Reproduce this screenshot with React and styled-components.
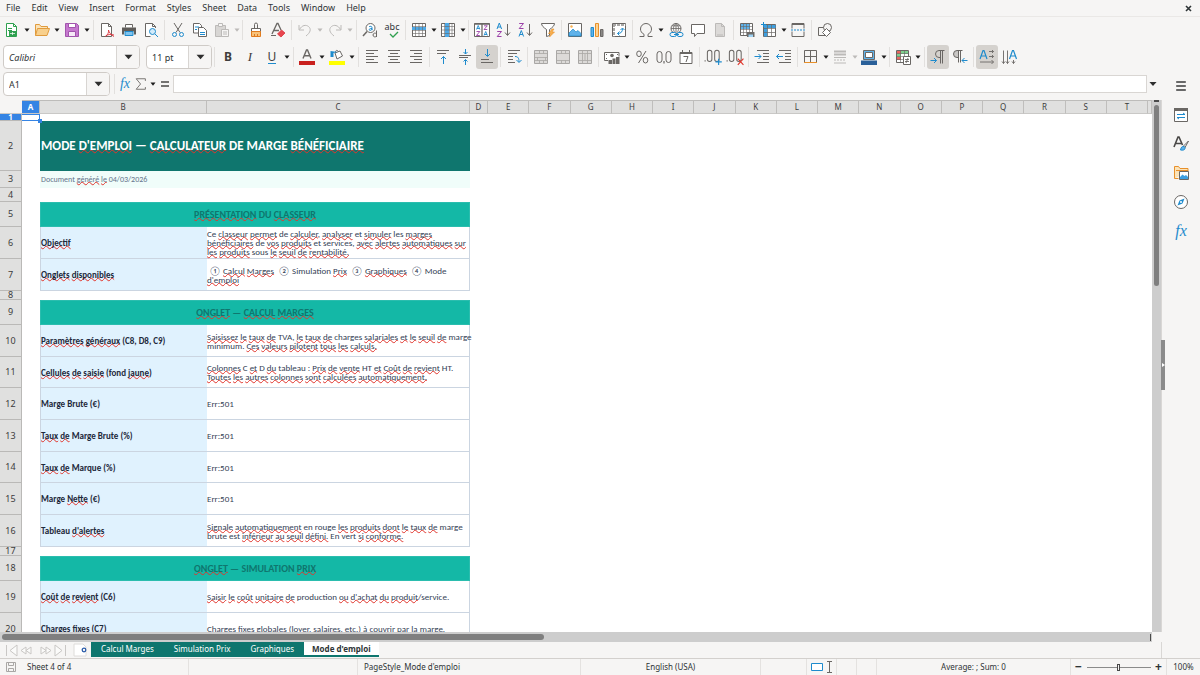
import React, { useState } from "react";
import styled, { createGlobalStyle, css } from "styled-components";

const GlobalStyle = createGlobalStyle`
  * {
    box-sizing: border-box;
  }

  body {
    margin: 0;
    background: #f6f5f4;
    color: #2e3436;
    font-family: "Noto Sans", sans-serif;
    font-size: 8px;
  }

  button,
  input {
    font-family: inherit;
    color: inherit;
    border: 0;
    margin: 0;
    padding: 0;
    background: none;
    outline: none;
  }
`;

const Window = styled.div`
  height: 100vh;
  display: flex;
  flex-direction: column;
  overflow: hidden;
`;

/* ---------- menu bar ---------- */

const MenuBar = styled.nav`
  display: flex;
  align-items: center;
  gap: 11px;
  height: 17px;
  padding: 0 6px;
  border-bottom: 1px solid #eae8e6;
  flex-shrink: 0;
`;

const MenuItem = styled.button`
  font-size: 9px;
  line-height: 16px;
`;

const CloseButton = styled.button`
  display: flex;
  margin-left: auto;
  margin-right: 2px;
`;

/* ---------- toolbars ---------- */

const Toolbar = styled.div`
  display: flex;
  align-items: center;
  height: ${(props) => props.$height};
  padding-left: ${(props) => props.$start};
  flex-shrink: 0;
`;

const ToolButton = styled.button`
  display: flex;
  align-items: center;
  justify-content: center;
  width: 22px;
  height: 24px;
  border-radius: 3px;
  background: ${(props) => (props.$pressed ? "#d5d2ce" : "none")};
`;

const CaretButton = styled.button`
  display: flex;
  align-items: center;
  justify-content: center;
  width: ${(props) => (props.$narrow ? "7px" : "8px")};
  height: 24px;
`;

const Separator = styled.span`
  width: 1px;
  height: 20px;
  margin: 0 2px;
  background: #e2e0de;
`;

const Combo = styled.div`
  display: flex;
  width: ${(props) => props.$width};
  height: 24px;
  margin-right: ${(props) => props.$gap || "0"};
  border: 1px solid #cfcbc7;
  border-radius: 4px;
  background: #fff;
  overflow: hidden;
  flex-shrink: 0;

  input {
    flex: 1;
    min-width: 0;
    padding-left: 5px;
    font-size: 9px;
    font-style: ${(props) => (props.$italic ? "italic" : "normal")};
  }

  button {
    display: flex;
    align-items: center;
    justify-content: center;
    width: 23px;
    border-left: 1px solid #d8d5d2;
    background: #f6f5f4;
  }
`;

/* ---------- work area ---------- */

const Body = styled.div`
  display: flex;
  flex: 1;
  min-height: 0;
`;

const Work = styled.main`
  display: flex;
  flex-direction: column;
  flex: 1;
  min-width: 0;
`;

const FormulaBar = styled.div`
  display: flex;
  align-items: center;
  height: 29px;
  padding: 0 5px 3px 3px;
  flex-shrink: 0;
`;

const FormulaIcon = styled.button`
  display: flex;
  align-items: center;
  justify-content: center;
  width: 16px;
  height: 24px;
`;

const FormulaInput = styled.input`
  flex: 1;
  height: 18px;
  margin-right: 2px;
  padding: 0 4px;
  font-size: 9px;
  border: 1px solid #d9d6d3;
  background: #fff;
`;

const SheetArea = styled.div`
  display: flex;
  flex: 1;
  min-height: 0;
`;

const SheetView = styled.div`
  flex: 1;
  min-width: 0;
  overflow: hidden;
  background: #fff;
`;

const Sheet = styled.table`
  width: 100%;
  table-layout: fixed;
  border-collapse: separate;
  border-spacing: 0;

  td,
  th {
    padding: 0;
  }
`;

const ColumnHeader = styled.th`
  height: 14px;
  font-size: 8px;
  line-height: 12px;
  font-weight: ${(props) => (props.$active ? 700 : 400)};
  color: ${(props) => (props.$active ? "#fff" : "#3c3c3c")};
  background: ${(props) => (props.$active ? "#3584e4" : "#e0e0df")};
  border-top: 1px solid #bdbcba;
  border-bottom: 1px solid #c9c8c6;
  border-right: 1px solid #bfbebc;
`;

const Corner = styled(ColumnHeader)`
  background: #f6f5f4;
  border-top-color: #f6f5f4;
  border-right: 0;
`;

const RowHeader = styled.th`
  height: ${(props) => props.$height}px;
  font-size: ${(props) => (props.$active ? "8px" : "9px")};
  line-height: 6px;
  font-weight: ${(props) => (props.$active ? 700 : 400)};
  color: ${(props) => (props.$active ? "#fff" : "#3c3c3c")};
  background: ${(props) => (props.$active ? "#3584e4" : "#e0e0df")};
  border-bottom: 1px solid #bab9b7;
  border-right: 1px solid #bab9b7;
`;

const cellText = css`
  font-family: Carlito, Lato, sans-serif;
  text-align: left;
  vertical-align: middle;
`;

const Cursor = styled.td`
  position: relative;
  border: 1px solid #3584e4;
  border-left: 0;

  &::after {
    content: "";
    position: absolute;
    right: -3px;
    bottom: -3px;
    width: 4px;
    height: 4px;
    background: #3584e4;
  }
`;

const TitleCell = styled.td`
  ${cellText}
  && {
    padding-left: 1px;
  }
  font-size: 13px;
  line-height: 16px;
  font-weight: 700;
  color: #fff;
  background: #0f766e;
`;

const DateCell = styled.td`
  ${cellText}
  && {
    padding-left: 1px;
  }
  font-size: 8px;
  line-height: 9px;
  color: #64748b;
  background: #f0fdfa;
`;

const SectionCell = styled.td`
  ${cellText}
  text-align: center;
  font-size: 10px;
  line-height: 10px;
  font-weight: 700;
  color: #0f766e;
  background: #14b8a6;
  border: 1px solid #2bbdae;
`;

const LabelCell = styled.td`
  ${cellText}
  font-size: 9px;
  line-height: 9px;
  font-weight: 700;
  color: #1e293b;
  background: #e0f2fe;
  border-left: 1px solid #cbd5e1;
  border-bottom: 1px solid #cbd5e1;
`;

const ValueCell = styled.td`
  ${cellText}
  font-size: 9px;
  line-height: 9px;
  white-space: pre;
  color: #334155;
  border-right: 1px solid #cbd5e1;
  border-bottom: 1px solid #cbd5e1;
`;

const Misspelt = styled.span`
  text-decoration: underline wavy #e0342b 1px;
  text-decoration-skip-ink: none;
  text-underline-offset: -1px;
`;

/* ---------- scroll bars ---------- */

const VerticalTrack = styled.div`
  width: 10px;
  padding: 0 2px;
  background: #cdcdcd;
  border-right: 1px solid #d9d7d5;
  flex-shrink: 0;

  &::before {
    content: "";
    display: block;
    height: 2px;
    margin-bottom: 3px;
    background: #4a4a4a;
  }
`;

const VerticalThumb = styled.div`
  height: 34%;
  border-radius: 3px;
  background: #7f7f7f;
`;

const HorizontalTrack = styled.div`
  display: flex;
  align-items: center;
  justify-content: space-between;
  height: 10px;
  margin-right: 10px;
  padding: 0 1px 0 2px;
  background: #cdcdcd;
  flex-shrink: 0;

  &::after {
    content: "";
    width: 1px;
    height: 7px;
    background: #4a4a4a;
  }
`;

const HorizontalThumb = styled.div`
  width: 47.2%;
  height: 6px;
  border-radius: 3px;
  background: #7f7f7f;
`;

/* ---------- sheet tabs ---------- */

const TabBar = styled.div`
  display: flex;
  height: 16px;
  padding-left: 5px;
  border-right: 1px solid #d9d7d5;
  flex-shrink: 0;
`;

const TabNav = styled.button`
  display: flex;
  align-items: center;
  width: ${(props) => props.$width};
`;

const SheetTab = styled.button`
  height: 15px;
  padding: 0 ${(props) => (props.$active ? "8px" : "10px")};
  font-size: 8px;
  line-height: 13px;
  font-weight: ${(props) => (props.$active ? 700 : 400)};
  color: ${(props) => (props.$active ? "#2e3436" : "#fff")};
  background: ${(props) => (props.$active ? "#fff" : "#0f766e")};
  border-bottom: 2px solid #0f766e;
`;

/* ---------- side bar ---------- */

const SideBar = styled.aside`
  position: relative;
  display: flex;
  flex-direction: column;
  align-items: center;
  width: 38px;
  flex-shrink: 0;
`;

const SideButton = styled.button`
  display: flex;
  align-items: center;
  justify-content: center;
  width: 29px;
  height: 29px;
`;

const SideHandle = styled.button`
  position: absolute;
  left: -1px;
  top: 50%;
  display: flex;
  align-items: center;
  width: 4px;
  height: 50px;
  margin-top: -25px;
  background: #8b8b8b;
`;

/* ---------- status bar ---------- */

const StatusBar = styled.footer`
  display: grid;
  grid-template-columns: 21px 168fr 169fr 223fr 180fr 46px 30px 20px 20px 194fr 96px 33px;
  height: 17px;
  border-top: 1px solid #d3d0cd;
  flex-shrink: 0;
`;

const StatusCell = styled.div`
  display: flex;
  align-items: center;
  justify-content: ${(props) => (props.$left ? "flex-start" : "center")};
  gap: 4px;
  padding-left: ${(props) => (props.$left ? "6px" : "0")};
  font-size: 8px;
  line-height: 14px;
  white-space: nowrap;
  border-right: ${(props) => (props.$open ? "0" : "1px solid #e4e2e0")};
`;

const ZoomButton = styled.button`
  width: 8px;
  font-size: 12px;
  line-height: 12px;
  font-weight: 700;
`;

const ZoomSlider = styled.input`
  width: 64px;
  height: 9px;
  appearance: none;

  &::-webkit-slider-runnable-track {
    height: 1px;
    background: #8b8b8b;
  }

  &::-webkit-slider-thumb {
    appearance: none;
    width: 3px;
    height: 7px;
    margin-top: -3px;
    border: 1px solid #4a4a4a;
    background: #f6f5f4;
  }
`;

/* ---------- icons ---------- */

const INK = "#6a6764";
const BLUE = "#1e8bcd";
const GREY = "#bcbab8";

const Svg = ({ children, size = 16 }) => (
  <svg width={size} height={size} viewBox="0 0 16 16" fill="none" stroke={INK}>
    {children}
  </svg>
);

const Glyph = styled.span`
  font-size: ${(props) => props.$size || "14px"};
  line-height: 16px;
  font-weight: ${(props) => props.$weight || 400};
  font-style: ${(props) => (props.$italic ? "italic" : "normal")};
  font-family: ${(props) => (props.$serif ? '"Liberation Serif", serif' : "inherit")};
  color: ${(props) => props.$color || "#3f3d3b"};
`;

const UnderlineGlyph = styled(Glyph)`
  line-height: 13px;
  border-bottom: 1px solid #1e8bcd;
`;

const Caret = ({ color = "#1c1c1c", size = 6 }) => (
  <svg width={size} height={size} viewBox="0 0 6 6">
    <path d="M0.5 1.5h5L3 4.8z" fill={color} />
  </svg>
);

const BigCaret = () => (
  <svg width="9" height="6" viewBox="0 0 9 6">
    <path d="M0.5 0.8h8L4.5 5.2z" fill="#2e2e2e" />
  </svg>
);

const Lines = ({ rows, color = INK }) => (
  <path d={rows.map(([x, y, w]) => `M${x} ${y}h${w}`).join("")} stroke={color} />
);

const ICONS = {
  newDoc: (
    <Svg>
      <path d="M2.5 1.5h7l3 3v10h-10z" fill="#fff" stroke="#2fa04f" />
      <path d="M9.5 1.5v3h3" stroke="#2fa04f" />
      <path d="M4 6.500h4M4 8.500h4" stroke="#2fa04f" />
      <path d="M5 9h7v5H5z" fill="#2fa04f" stroke="none" />
      <path d="M6 11.500h5M8.500 10v3" stroke="#fff" strokeWidth="0.700" />
    </Svg>
  ),
  open: (
    <Svg>
      <path d="M1.5 13.5v-11h4l1.5 2h6.500v2" fill="#fbe3b8" stroke="#e09b3d" />
      <path d="M3.500 6.500h12l-2.500 7h-11.500z" fill="#f8d08d" stroke="#e09b3d" />
    </Svg>
  ),
  save: (
    <Svg>
      <path d="M1.500 1.500h11l2 2v11h-13z" fill="#c678cf" stroke="#a255ad" />
      <path d="M4.500 1.500h7v4h-7z" fill="#fff" stroke="#a255ad" />
      <path d="M4.500 9.500h7v5h-7z" fill="#f7eaf8" stroke="#a255ad" />
    </Svg>
  ),
  pdf: (
    <Svg>
      <path d="M2.500 1.500h7l3 3v10h-10z" fill="#fff" />
      <path d="M9.500 1.500v3h3" />
      <path d="M6.500 14.500c2-1.500 3.500-4 3-6.500M6.500 14c2-1.500 5-2 8.500-1M9.500 8c.5 2.500 2.500 5 5.500 6.500" stroke="#d9343c" strokeWidth="0.900" />
    </Svg>
  ),
  print: (
    <Svg>
      <path d="M4.500 5.500v-3h7v3" fill="#fff" />
      <path d="M1 5.500h14v7h-2v-3H3v3H1z" fill="#5f5c59" stroke="none" />
      <path d="M4 9.500h8v4H4z" fill="#7fc3ee" stroke={BLUE} />
    </Svg>
  ),
  preview: (
    <Svg>
      <path d="M12.500 6V4.500l-3-3h-7v13h5" fill="#fff" />
      <path d="M9.500 1.500v3h3" />
      <circle cx="9.500" cy="9.500" r="3" fill="#d3ebfa" stroke={BLUE} />
      <path d="M12 12l3 3" stroke={BLUE} />
    </Svg>
  ),
  cut: (
    <Svg>
      <path d="M4 1l6 9.500M12 1L6 10.500" />
      <circle cx="4.500" cy="12.500" r="2" stroke={BLUE} />
      <circle cx="11.500" cy="12.500" r="2" stroke={BLUE} />
    </Svg>
  ),
  copy: (
    <Svg>
      <path d="M1.500 1.500h6l2 2v7.500h-8z" fill="#fff" />
      <path d="M6.500 5.500h5l3 3v6h-8z" fill="#fff" />
      <path d="M3 5h4M3 7.500h2" stroke={BLUE} />
      <path d="M8 10.500h5M8 12.500h5" stroke={BLUE} />
    </Svg>
  ),
  paste: (
    <Svg>
      <path d="M1.500 3.500h10v11h-10z" fill="#d8d6d4" stroke={GREY} />
      <path d="M4.500 1.500h4v3h-4z" fill="#f6f5f4" stroke={GREY} />
      <path d="M7.500 7.500h7v7h-7z" fill="#f6f5f4" stroke={GREY} />
      <path d="M9 10h4M9 12h4" stroke={GREY} />
    </Svg>
  ),
  clone: (
    <Svg>
      <path d="M6.500 6V2.500a1.500 1.500 0 0 1 3 0V6" />
      <path d="M3.500 6.500h9v3h-9z" fill="#fff" />
      <path d="M3.500 9.500h9v5h-9z" fill="#f8c27a" stroke="#e07b1e" />
      <path d="M6.500 12v2.500M9.500 12v2.500" stroke="#e07b1e" />
    </Svg>
  ),
  clear: (
    <Svg>
      <path d="M2 12L7 1.500h1l3 6.500M4 8.500h5" strokeWidth="1.300" />
      <path d="M7.500 12l4-4L15 11l-4 4z" fill="#e8464f" stroke="#d9343c" strokeWidth="0.800" />
      <path d="M1 13.500h5" />
    </Svg>
  ),
  undo: (
    <Svg>
      <path d="M2 3v5h5M2.500 7.500C5 3 9 2.500 11.500 4.500c3 2.500 2 6-2.500 9.500" stroke={GREY} />
    </Svg>
  ),
  redo: (
    <Svg>
      <path d="M14 3v5H9M13.500 7.500C11 3 7 2.500 4.500 4.500c-3 2.500-2 6 2.500 9.500" stroke={GREY} />
    </Svg>
  ),
  find: (
    <Svg>
      <circle cx="8.500" cy="6" r="4.500" fill="#fff" />
      <path d="M5 9.500L1 14" strokeWidth="1.500" />
      <path d="M7 4.800c1-.8 3-.7 3 .8v2.600M10 6.500c-3-.2-3.500 1.700-2 1.900 1 0 2-.7 2-1.400" stroke={BLUE} />
      <path d="M14.500 8.500v6.500M14.500 12c-1-1.500-3.500-1-3.500 1s2.500 2.500 3.500 1" />
    </Svg>
  ),
  table: (
    <Svg>
      <path d="M1.500 1.500h13v13h-13z" fill="#fff" />
      <path d="M1 5h14v3H1z" fill="#4fa9e6" stroke="none" />
      <path d="M1.500 4.500h13M1.500 8.500h13M1.500 11.500h13M4.500 1.500v13M8 1.500v13M11.500 1.500v13" strokeWidth="0.600" />
    </Svg>
  ),
  column: (
    <Svg>
      <path d="M1.500 1.500h13v13h-13z" fill="#fff" />
      <path d="M5 1h4v14H5z" fill="#4fa9e6" stroke="none" />
      <path d="M1.500 4.500h13M1.500 8h13M1.500 11.500h13M4.500 1.500v13M9.500 1.500v13M12 1.500v13" strokeWidth="0.600" />
    </Svg>
  ),
  sort: (
    <Svg>
      <path d="M0.500 1.500h15v13h-15z" fill="#fff" />
      <path d="M0.500 2h15M8 2v12.500" strokeWidth="1.300" />
      <path d="M2.500 7.500l1.700-4 1.700 4M3 6.500h2.500M10 13.500l1.700-4 1.700 4M10.500 12.500H13" stroke={BLUE} strokeWidth="0.900" />
      <path d="M2.500 9.500h3.300l-3.300 4h3.300M10 3.800h3.300L10 7.500h3.300" stroke="#9b3fa8" strokeWidth="0.900" />
    </Svg>
  ),
  sortAsc: (
    <Svg>
      <path d="M1 7l2.300-6 2.300 6M1.700 5h3.200" stroke={BLUE} />
      <path d="M1.200 9.500h4.300l-4.300 5h4.300" stroke="#9b3fa8" />
      <path d="M11.500 2v11M9 10.500l2.500 3 2.500-3" />
    </Svg>
  ),
  sortDesc: (
    <Svg>
      <path d="M1.200 1.500h4.300l-4.300 5h4.300" stroke="#9b3fa8" />
      <path d="M1 14.500l2.300-6 2.300 6M1.700 12.500h3.200" stroke={BLUE} />
      <path d="M11.500 2v11M9 10.500l2.500 3 2.500-3" />
    </Svg>
  ),
  filter: (
    <Svg>
      <path d="M1.500 1.500h13c0 2-2 4-5 6v6l-3 1v-7c-3-2-5-4-5-6z" fill="#fff" />
      <path d="M12 7l-3.500 4.500h2.500l-1.500 3.500 5-5h-2.500l2-3z" fill="#f8b04f" stroke="#e8902a" strokeWidth="0.600" />
    </Svg>
  ),
  image: (
    <Svg>
      <path d="M1.500 1.500h13v13h-13z" fill="#fff" />
      <path d="M2 14v-3l4-4 3 3 2-1.500 3 3V14z" fill="#5fb2ea" stroke={BLUE} strokeWidth="0.700" />
      <circle cx="4.500" cy="4.500" r="1.200" fill="#f8b04f" stroke="none" />
    </Svg>
  ),
  chart: (
    <Svg>
      <path d="M2 5.500h2.500v9H2z" fill="#5fb2ea" stroke={BLUE} />
      <path d="M6.500 1.500h3v13h-3z" fill="#fbd394" stroke="#e8902a" />
      <path d="M11.500 7.500H14v7h-2.500z" fill="#8b8987" />
    </Svg>
  ),
  pivot: (
    <Svg>
      <path d="M1.500 1.500h13v13h-13z" fill="#fff" />
      <path d="M2 3h12.500M3 2v12.500" strokeWidth="2" stroke="#a9a7a5" strokeDasharray="3 1" />
      <path d="M6.500 11.500c3.500 0 5-1.500 5-5M9.500 8l2-2 2 2M8.500 9.500l-2 2 2 2" stroke={BLUE} />
    </Svg>
  ),
  omega: (
    <Svg>
      <path d="M1.500 14.500H6v-2.200C3.500 11 2.500 9 2.500 7a5.500 5.500 0 0 1 11 0c0 2-1 4-3.500 5.300v2.200h4.500" />
    </Svg>
  ),
  link: (
    <Svg>
      <circle cx="8" cy="6.500" r="5" />
      <path d="M3 6.500h10M4 3.800h8M8 1.500v9M8 1.500c-3.500 3-3 7-1 9M8 1.500c3.500 3 3 7 1 9" strokeWidth="0.800" />
      <rect x="2" y="10.500" width="6.500" height="4" rx="2" fill="#f6f5f4" stroke={BLUE} />
      <rect x="9" y="10.500" width="6" height="4" rx="2" fill="#f6f5f4" stroke={BLUE} />
      <path d="M6 12.500h5" stroke={BLUE} />
    </Svg>
  ),
  comment: (
    <Svg>
      <path d="M1.500 2.500h13v9H7l-2.500 3v-3h-3z" fill="#fff" />
    </Svg>
  ),
  headerDoc: (
    <Svg>
      <path d="M3.500 1.500h6l3 3v10h-9z" fill="#dcdad8" stroke={GREY} />
      <path d="M9.500 1.500v3h3" stroke={GREY} />
      <path d="M5 13h6" stroke={GREY} />
    </Svg>
  ),
  printArea: (
    <Svg>
      <path d="M1.500 1.500h12v12h-12z" fill="#fff" />
      <path d="M2 2h9v5H2z" fill="#5fb2ea" stroke="none" />
      <path d="M1.500 4.500h12M1.500 7.500h12M1.500 10.500h12M4.500 1.500v12M7.500 1.500v12M10.500 1.500v12" strokeWidth="0.600" />
      <path d="M8 10h7.500v5H8z" fill="#6d6a67" stroke="none" />
      <path d="M9.500 12.500h4.500V15H9.500z" fill="#9fd3f4" stroke="none" />
    </Svg>
  ),
  freeze: (
    <Svg>
      <path d="M2.500 2.500h12v12h-12z" fill="#fff" />
      <path d="M3 3h11.500v3H3zM3 3h3.500v11.500H3z" fill="#3e9fe0" stroke="none" />
      <path d="M2.500 6.500h12M2.500 10.500h12M6.500 2.500v12M10.500 2.500v12" strokeWidth="0.700" />
      <path d="M2.500 0v5M0 2.500h5" stroke={BLUE} />
    </Svg>
  ),
  split: (
    <Svg>
      <path d="M2 6.500v-5h12v5M2 9.500v5h12v-5" />
      <path d="M2 2h12" strokeWidth="2" />
      <path d="M1 8h14" stroke={BLUE} strokeDasharray="2 1" />
    </Svg>
  ),
  shapes: (
    <Svg>
      <path d="M1.500 5.500h7v8h-7z" />
      <circle cx="10.500" cy="5.500" r="4" fill="#f6f5f4" />
      <path d="M9.500 6.500l4 4-4 4-4-4z" fill="#fff" />
    </Svg>
  ),
  fontColor: (
    <Svg>
      <path d="M4 9.500L7.500 1h1L12 9.500M5.200 6.800h5.600" strokeWidth="1.400" />
      <path d="M0 12h16v4H0z" fill="#c9211e" stroke="none" />
    </Svg>
  ),
  fillColor: (
    <Svg>
      <path d="M6 4l5-2 2.500 5-5.500 3z" fill="#fff" />
      <path d="M6.500 4C6 1.500 8 .5 9.500 2.500" />
      <path d="M1.500 2v6h3V4l4-1z" fill={BLUE} stroke="none" />
      <path d="M0 12h16v4H0z" fill="#ffff00" stroke="none" />
    </Svg>
  ),
  alignLeft: <Svg><Lines rows={[[2, 1.5, 12], [2, 4.5, 8], [2, 7.5, 12], [2, 10.5, 8], [2, 13.5, 12]]} /></Svg>,
  alignCenter: <Svg><Lines rows={[[2, 1.5, 12], [4, 4.5, 8], [2, 7.5, 12], [4, 10.5, 8], [2, 13.5, 12]]} /></Svg>,
  alignRight: <Svg><Lines rows={[[2, 1.5, 12], [6, 4.5, 8], [2, 7.5, 12], [6, 10.5, 8], [2, 13.5, 12]]} /></Svg>,
  top: (
    <Svg>
      <Lines rows={[[2, 1.5, 12], [2, 4.500, 9]]} />
      <path d="M8.500 15V7.500M6 10l2.500-2.500L11 10" stroke={BLUE} />
    </Svg>
  ),
  middle: (
    <Svg>
      <Lines rows={[[2, 6.5, 12], [2, 8.500, 9]]} />
      <path d="M8.500 0v5M6.500 3l2 2 2-2M8.500 16v-5.500M6.500 12.500l2-2 2 2" stroke={BLUE} />
    </Svg>
  ),
  bottom: (
    <Svg>
      <Lines rows={[[2, 10.500, 8], [2, 13.500, 12]]} />
      <path d="M8.500 0v7M6 5l2.500 2.500L11 5" stroke={BLUE} />
    </Svg>
  ),
  wrap: (
    <Svg>
      <Lines rows={[[2, 1.500, 12], [2, 4.500, 9], [2, 7.500, 5], [2, 10.500, 5], [2, 13.500, 7]]} />
      <path d="M9 7.500c3 0 4 1.500 4 5.500M10.500 11l2.500 2.500 2.500-2.500" stroke={BLUE} />
    </Svg>
  ),
  merge: (
    <Svg>
      <path d="M1.500 1.500h13v13h-13z" fill="#dcdad8" stroke="#a9a7a5" />
      <path d="M1.500 4.500h13M1.500 8.500h13M1.500 11.500h13M6.500 1.500v3M10.500 1.500v3M6.500 11.500v3M10.500 11.500v3M4.500 8.500v3M12.500 8.500v3" stroke="#a9a7a5" strokeWidth="0.800" />
    </Svg>
  ),
  mergeCells: (
    <Svg>
      <path d="M1.500 1.500h13v13h-13z" fill="#dcdad8" stroke="#a9a7a5" />
      <path d="M1.500 4.500h13M1.500 11.500h13M6.500 1.500v3M10.500 1.500v3M6.500 11.500v3M10.500 11.500v3" stroke="#a9a7a5" strokeWidth="0.800" />
    </Svg>
  ),
  splitCells: (
    <Svg>
      <path d="M1.500 1.500h13v13h-13z" fill="#dcdad8" stroke="#a9a7a5" />
      <path d="M1.500 4.500h13M1.500 11.500h13M5.500 1.500v13M10.500 1.500v13M8 5v6" stroke="#a9a7a5" strokeWidth="0.800" />
    </Svg>
  ),
  currency: (
    <Svg>
      <path d="M4 11.500H0.500v-8h14.500v4" fill="#fff" />
      <path d="M2 5.500h1M13 5.500h1M2 9.500h1" />
      <circle cx="8" cy="6.500" r="1.800" fill="#6a6764" stroke="none" />
      <path d="M4.500 11h3.500v4H4.500zM8.500 9.500h3V15h-3zM12 8h3.500v7H12z" fill="#6a6764" stroke="none" />
    </Svg>
  ),
  date: (
    <Svg>
      <path d="M2 3.500h12v11H2z" fill="#fff" />
      <path d="M2 4h12" strokeWidth="2" />
      <path d="M4.500 1v2M11.500 1v2M5.500 7.500h4.500l-2 5.500" />
    </Svg>
  ),
  addDecimal: (
    <Svg size={18}>
      <path d="M0.500 11.500h1" strokeWidth="1.200" />
      <rect x="3" y="2" width="4" height="10" rx="2" strokeWidth="0.900" />
      <rect x="9.500" y="2" width="4" height="10" rx="2" strokeWidth="0.900" />
      <path d="M13 9.500v5.500M10.200 12.300h5.600" stroke={BLUE} />
    </Svg>
  ),
  removeDecimal: (
    <Svg size={18}>
      <path d="M0.500 11.500h1" strokeWidth="1.200" />
      <rect x="3" y="2" width="4" height="10" rx="2" strokeWidth="0.900" />
      <rect x="9.500" y="2" width="4" height="10" rx="2" strokeWidth="0.900" />
      <path d="M10.500 9.500l5 5.500M15.500 9.500l-5 5.500" stroke="#e0342b" />
    </Svg>
  ),
  indent: (
    <Svg>
      <Lines rows={[[3, 1.500, 12], [9, 4.500, 6], [9, 7.500, 6], [9, 10.500, 6], [3, 13.500, 12]]} />
      <path d="M0.500 7.500h6.500M4.500 5L7 7.500 4.500 10" stroke={BLUE} />
    </Svg>
  ),
  outdent: (
    <Svg>
      <Lines rows={[[3, 1.500, 12], [9, 4.500, 6], [9, 7.500, 6], [9, 10.500, 6], [3, 13.500, 12]]} />
      <path d="M0.500 7.500h6.500M3 5L0.500 7.500 3 10" stroke={BLUE} />
    </Svg>
  ),
  borders: (
    <Svg>
      <path d="M1.500 13.500v-12h12v12M7.500 1.500v12M1.500 7.500h12" />
      <path d="M1 13.500h13" stroke="#e8902a" />
    </Svg>
  ),
  borderStyle: (
    <Svg>
      <path d="M2 2.500h12M2 5.500h12" stroke="#bcbab8" strokeWidth="2" />
      <path d="M2 8.500h12" stroke="#bcbab8" />
      <path d="M2 11h12" stroke="#bcbab8" strokeDasharray="2 1" />
      <path d="M2 14h12" stroke="#bcbab8" />
    </Svg>
  ),
  borderColor: (
    <Svg>
      <path d="M2.500 1.500h11v9h-11z" stroke={INK} fill="#5fb2ea" />
      <path d="M4.500 3.500h7v5h-7z" fill="#fff" />
      <path d="M0 11.500h16V16H0z" fill="#2a6099" stroke="none" />
    </Svg>
  ),
  conditional: (
    <Svg>
      <path d="M1.500 1.500h12v12h-12z" fill="#fff" />
      <path d="M2 2h4v3H2zM2 8h4v3H2z" fill="#e8665f" stroke="none" />
      <path d="M6 2h7v3H6zM2 5h4v3H2z" fill="#7fd08f" stroke="none" />
      <path d="M1.500 4.500h12M1.500 7.500h12M1.500 10.500h12M5.500 1.500v12M9.500 1.500v12" strokeWidth="0.600" />
      <path d="M8.500 7.500h7v8h-7z" fill="#fff" />
      <path d="M10 10.500h4M10 12.500h4M13 9l-2 5" strokeWidth="0.900" />
    </Svg>
  ),
  ltr: (
    <Svg>
      <path d="M14.500 1.500H9a3.500 3.500 0 0 0 0 7h1.500M10.500 1.500v13M12.500 1.500v13" />
      <path d="M0.500 11.500h6M4 9l2.500 2.500L4 14" stroke={BLUE} />
    </Svg>
  ),
  rtl: (
    <Svg>
      <path d="M6.500 1.500H5a3.500 3.500 0 0 0 0 7h1.500z" fill="#c9c7c5" />
      <path d="M6 1.500h4.500M6.500 1.500v12M8.500 1.500v12" />
      <path d="M15.500 11.500H10M12.500 9L10 11.500l2.500 2.500" stroke={BLUE} />
    </Svg>
  ),
  textLtr: (
    <Svg>
      <path d="M1 10L4 1.500h1L8 10M2 7h5" stroke={BLUE} strokeWidth="1.200" />
      <path d="M10 2.500h4.500M13 1l1.500 1.500L13 4M10 7.500h4.500M13 6l1.500 1.500L13 9M1 13h13.500M12.500 11l2 2-2 2" strokeWidth="0.900" />
    </Svg>
  ),
  textTtb: (
    <Svg>
      <path d="M8.500 10L11.500 1.500h1L15.500 10M9.500 7h5" stroke={BLUE} strokeWidth="1.200" />
      <path d="M2.500 1.500v13M1 12.500l1.500 2 1.500-2M6.500 1.500v13M5 12.500l1.500 2 1.500-2M12.500 11v3.500M11 12.500l1.500 2 1.500-2" strokeWidth="0.900" />
    </Svg>
  ),
  sigma: (
    <Svg size={14}>
      <path d="M13 4.500V2H2.500l5 6-5 6H13v-2.500" />
    </Svg>
  ),
  hamburger: <Svg size={14}><path d="M2.500 3.500h11M2.500 8h11M2.500 12.500h11" stroke="#3a3a3a" strokeWidth="1.600" /></Svg>,
  properties: (
    <Svg>
      <path d="M1.500 1.500h13v13h-13z" fill="#fff" />
      <path d="M1 2.500h14" strokeWidth="3" />
      <path d="M4 7.500h8M10 6l2 1.500M4 10.500h8M6 12l-2-1.500" stroke={BLUE} />
    </Svg>
  ),
  styles: (
    <Svg>
      <path d="M1 11L5 1h1l3.500 8M2.500 7.500h6" strokeWidth="1.600" stroke="#4a4846" />
      <path d="M15.500 5l-5 5 1.500 1.500z" fill="#fff" />
      <path d="M11 10.500c-2-.5-3 1-3.500 3.500 2.500.5 5 0 4.500-2.500z" fill="#5fb2ea" stroke={BLUE} />
    </Svg>
  ),
  gallery: (
    <Svg>
      <path d="M1.500 13.500v-12h4l1.500 2h8v3" fill="#fbe3b8" stroke="#e8902a" />
      <path d="M1.500 13.500h4M3 5.500h12" stroke="#e8902a" />
      <path d="M6.500 6.500h9v8h-9z" fill="#fff" />
      <path d="M7 14v-2l2.500-2.500 2 1.500 1.500-1 2 2v2z" fill="#3e9fe0" stroke="none" />
    </Svg>
  ),
  navigator: (
    <Svg>
      <circle cx="8" cy="8" r="6.500" fill="#fff" />
      <path d="M11.500 4.500L9.500 9.500l-5 2 2-5z" fill={BLUE} stroke="none" />
      <circle cx="8" cy="8" r="1" fill="#fff" stroke="none" />
    </Svg>
  ),
  percent: (
    <Svg>
      <ellipse cx="5" cy="4.800" rx="2.300" ry="2.800" />
      <ellipse cx="11.500" cy="11.200" rx="2.300" ry="2.800" />
      <path d="M12 2L4.500 14" />
    </Svg>
  ),
  number: (
    <Svg>
      <rect x="1" y="2.500" width="5" height="11" rx="2.500" />
      <rect x="10" y="2.500" width="5" height="11" rx="2.500" />
      <path d="M8 12v2.500" strokeWidth="1.200" />
    </Svg>
  ),
  bold: <Glyph $size="12px" $weight={700}>B</Glyph>,
  italic: <Glyph $size="13px" $italic $serif>I</Glyph>,
  underline: <UnderlineGlyph $size="12px">U</UnderlineGlyph>,
  fx: <Glyph $size="14px" $italic $serif $color={BLUE}>fx</Glyph>,
  fxLarge: <Glyph $size="16px" $italic $serif $color={BLUE}>fx</Glyph>,
};

const SpellText = styled.span`
  display: flex;
  flex-direction: column;
  align-items: flex-end;
  font-size: 9px;
  line-height: 8px;
`;

ICONS.spell = (
  <SpellText>
    abc
    <svg width="10" height="7" viewBox="0 0 10 7" fill="none" stroke="#2fa04f" strokeWidth="1.300">
      <path d="M1 3l3 3 5-5" />
    </svg>
  </SpellText>
);

/* ---------- data ---------- */

const MENUS = ["File", "Edit", "View", "Insert", "Format", "Styles", "Sheet", "Data", "Tools", "Window", "Help"];

// "|" is a separator; second item is the kind of drop-down arrow, third the state
const STANDARD = [
  ["newDoc", "v"], ["open", "v"], ["save", "v"], "|",
  ["pdf"], ["print"], ["preview"], "|",
  ["cut"], ["copy"], ["paste", "narrow", "off"], "|",
  ["clone"], ["clear"], "|",
  ["undo", "v", "off"], ["redo", "v", "off"], "|",
  ["find"], ["spell"], "|",
  ["table", "narrow"], ["column", "narrow"], "|",
  ["sort"], ["sortAsc"], ["sortDesc"], ["filter"], "|",
  ["image"], ["chart"], ["pivot"], "|",
  ["omega", "v"], ["link"], ["comment"], ["headerDoc"], "|",
  ["printArea"], ["freeze", "narrow"], ["split"], "|",
  ["shapes"],
];

const FORMATTING = [
  "|", ["bold"], ["italic"], ["underline", "v"], "|",
  ["fontColor", "v"], ["fillColor", "v"], "|",
  ["alignLeft"], ["alignCenter"], ["alignRight"], "|",
  ["top"], ["middle"], ["bottom", "", "pressed"], "|",
  ["wrap"], "|",
  ["merge"], ["mergeCells"], ["splitCells"], "|",
  ["currency", "v"], ["percent"], ["number"], ["date"], "|",
  ["addDecimal"], ["removeDecimal"], "|",
  ["indent"], ["outdent"], "|",
  ["borders", "narrow"], ["borderStyle", "narrow", "off"], ["borderColor", "narrow"], "|",
  ["conditional", "v"], "|",
  ["ltr", "", "pressed"], ["rtl"], "|",
  ["textLtr", "", "pressed"], ["textTtb"],
];

const SIDE = ["hamburger", "properties", "styles", "gallery", "navigator", "fxLarge"];

const COLUMNS = "ABCDEFGHIJKLMNOPQRST".split("");

// words between asterisks are underlined by the spell checker
const ROWS = [
  { n: 1, h: 7 },
  { n: 2, h: 50, title: "MODE *D'EMPLOI* — *CALCULATEUR* DE MARGE *BÉNÉFICIAIRE*" },
  { n: 3, h: 17, date: "Document *généré* *le* 04/03/2026" },
  { n: 4, h: 14 },
  { n: 5, h: 25, section: "*PRÉSENTATION* DU *CLASSEUR*" },
  {
    n: 6, h: 32, label: "*Objectif*",
    value: "Ce *classeur* *permet* de *calculer*, *analyser* et *simuler* les *marges*\n*bénéficiaires* de *vos* *produits* et services, *avec* *alertes* *automatiques* *sur*\n*les* *produits* sous *le* *seuil* *de* *rentabilité.*",
  },
  {
    n: 7, h: 32, label: "*Onglets* *disponibles*",
    value: " ① *Calcul* *Marges*  ② Simulation *Prix*  ③ *Graphiques*  ④ Mode\n*d'emploi*",
  },
  { n: 8, h: 9 },
  { n: 9, h: 25, section: "*ONGLET* — *CALCUL* *MARGES*" },
  {
    n: 10, h: 32, label: "*Paramètres* *généraux* (C8, D8, C9)",
    value: "*Saisissez* *le* *taux* *de* TVA, *le* *taux* *de* charges *salariales* *et* *le* *seuil* *de* marge\nminimum. *Ces* *valeurs* *pilotent* *tous* *les* *calculs.*",
  },
  {
    n: 11, h: 31, label: "*Cellules* *de* *saisie* (fond *jaune*)",
    value: "*Colonnes* C *et* D *du* tableau : *Prix* *de* *vente* HT *et* *Coût* *de* *revient* HT.\n*Toutes* *les* *autres* *colonnes* *sont* *calculées* *automatiquement.*",
  },
  { n: 12, h: 32, label: "Marge Brute (€)", value: "Err:501" },
  { n: 13, h: 32, label: "*Taux* *de* Marge Brute (%)", value: "Err:501" },
  { n: 14, h: 31, label: "*Taux* *de* Marque (%)", value: "Err:501" },
  { n: 15, h: 32, label: "Marge *Nette* (€)", value: "Err:501" },
  {
    n: 16, h: 32, label: "Tableau *d'alertes*",
    value: "*Signale* *automatiquement* en rouge *les* *produits* *dont* *le* *taux* *de* marge\nbrute est *inférieur* *au* *seuil* *défini.* En vert *si* *conforme.*",
  },
  { n: 17, h: 9 },
  { n: 18, h: 25, section: "*ONGLET* — SIMULATION *PRIX*" },
  {
    n: 19, h: 32, label: "*Coût* *de* *revient* (C6)",
    value: "*Saisir* *le* *coût* *unitaire* *de* production *ou* *d'achat* *du* *produit*/service.",
  },
  {
    n: 20, h: 32, label: "Charges fixes (C7)",
    value: "Charges fixes *globales* (*loyer*, *salaires*, etc.) *à* *couvrir* par la marge.",
  },
];

const TABS = ["Calcul Marges", "Simulation Prix", "Graphiques", "Mode d'emploi"];

const Spelled = ({ text }) =>
  text.split("*").map((part, i) => (i % 2 ? <Misspelt key={i}>{part}</Misspelt> : part));

const Tools = ({ items }) =>
  items.map((item, i) => {
    if (item === "|") return <Separator key={i} />;
    const [name, arrow, state] = item;
    return (
      <React.Fragment key={i}>
        <ToolButton aria-label={name} $pressed={state === "pressed"}>
          {ICONS[name]}
        </ToolButton>
        {arrow && (
          <CaretButton aria-label={`${name} options`} $narrow={arrow === "narrow"}>
            <Caret color={state === "off" ? GREY : undefined} />
          </CaretButton>
        )}
      </React.Fragment>
    );
  });

const ComboBox = ({ label, value, ...rest }) => (
  <Combo {...rest}>
    <input aria-label={label} defaultValue={value} />
    <button aria-label={`${label} list`}>
      <BigCaret />
    </button>
  </Combo>
);

const SheetRow = ({ row }) => {
  const wide = row.title || row.date || row.section;
  return (
    <tr>
      <RowHeader scope="row" $height={row.h} $active={row.n === 1}>
        {row.n}
      </RowHeader>
      {row.n === 1 ? <Cursor /> : <td />}
      {row.title && <TitleCell colSpan={2}><Spelled text={row.title} /></TitleCell>}
      {row.date && <DateCell colSpan={2}><Spelled text={row.date} /></DateCell>}
      {row.section && <SectionCell colSpan={2}><Spelled text={row.section} /></SectionCell>}
      {row.label && <LabelCell><Spelled text={row.label} /></LabelCell>}
      {row.value && <ValueCell><Spelled text={row.value} /></ValueCell>}
      {!wide && !row.label && <td colSpan={2} />}
      <td colSpan={18} />
    </tr>
  );
};

const App = () => {
  const [tab, setTab] = useState("Mode d'emploi");

  return (
    <Window>
      <GlobalStyle />
      <MenuBar>
        {MENUS.map((menu) => (
          <MenuItem key={menu}>{menu}</MenuItem>
        ))}
        <CloseButton aria-label="Close">
          <svg width="7" height="7" viewBox="0 0 7 7" stroke="#2e3436" strokeWidth="1.600">
            <path d="M1 1l5 5M6 1L1 6" />
          </svg>
        </CloseButton>
      </MenuBar>

      <Toolbar $height="26px" $start="1px">
        <Tools items={STANDARD} />
      </Toolbar>

      <Toolbar $height="28px" $start="3px">
        <ComboBox label="Font name" value="Calibri" $width="137px" $gap="6px" $italic />
        <ComboBox label="Font size" value="11 pt" $width="66px" />
        <Tools items={FORMATTING} />
      </Toolbar>

      <Body>
        <Work>
          <FormulaBar>
            <ComboBox label="Name box" value="A1" $width="107px" $gap="2px" />
            <Separator />
            <FormulaIcon aria-label="Function wizard">{ICONS.fx}</FormulaIcon>
            <FormulaIcon aria-label="Sum">{ICONS.sigma}</FormulaIcon>
            <CaretButton aria-label="Sum options">
              <Caret />
            </CaretButton>
            <FormulaIcon aria-label="Formula">
              <svg width="8" height="6" viewBox="0 0 8 6" stroke="#4a4846" strokeWidth="1.500">
                <path d="M0 1h8M0 5h8" />
              </svg>
            </FormulaIcon>
            <FormulaInput aria-label="Input line" />
            <CaretButton aria-label="Expand formula bar">
              <BigCaret />
            </CaretButton>
          </FormulaBar>

          <SheetArea>
            <SheetView>
              <Sheet>
                <colgroup>
                  <col style={{ width: 22 }} />
                  <col style={{ width: 18 }} />
                  <col style={{ width: 167 }} />
                  <col style={{ width: 263 }} />
                  <col style={{ width: 18 }} />
                  {COLUMNS.slice(4).map((name) => (
                    <col key={name} />
                  ))}
                  <col style={{ width: 4 }} />
                </colgroup>
                <thead>
                  <tr>
                    <Corner />
                    {COLUMNS.map((name) => (
                      <ColumnHeader key={name} scope="col" $active={name === "A"}>
                        {name}
                      </ColumnHeader>
                    ))}
                    <ColumnHeader />
                  </tr>
                </thead>
                <tbody>
                  {ROWS.map((row) => (
                    <SheetRow key={row.n} row={row} />
                  ))}
                </tbody>
              </Sheet>
            </SheetView>
            <VerticalTrack>
              <VerticalThumb />
            </VerticalTrack>
          </SheetArea>

          <HorizontalTrack>
            <HorizontalThumb />
          </HorizontalTrack>

          <TabBar>
            <TabNav aria-label="Scroll sheets" $width="68px">
              <svg width="62" height="13" viewBox="0 0 62 13" fill="#fbfbfa" stroke="#c9c7c5">
                <path d="M1.500 1v11M12 1L5 6.500l7 5.500zM26 3l-5 3.500 5 3.500zM21 3l-5 3.500 5 3.500zM36 3l5 3.500-5 3.500zM41 3l5 3.500-5 3.500zM50 1l7 5.500-7 5.500zM60.500 1v11" />
              </svg>
            </TabNav>
            <TabNav aria-label="Add sheet" $width="18px">
              <svg width="14" height="14" viewBox="0 0 14 14">
                <path d="M1 1h9l3 3v9H1z" fill="#fff" stroke="#dedcda" />
                <circle cx="11" cy="7" r="1.800" fill="#fff" stroke="#2a5ba8" strokeWidth="1.300" />
              </svg>
            </TabNav>
            {TABS.map((name) => (
              <SheetTab key={name} $active={name === tab} onClick={() => setTab(name)}>
                {name}
              </SheetTab>
            ))}
          </TabBar>
        </Work>

        <SideBar>
          {SIDE.map((name) => (
            <SideButton key={name} aria-label={name}>
              {ICONS[name]}
            </SideButton>
          ))}
          <SideHandle aria-label="Collapse sidebar">
            <svg width="4" height="6" viewBox="0 0 4 6">
              <path d="M1 1l3 2-3 2z" fill="#fff" />
            </svg>
          </SideHandle>
        </SideBar>
      </Body>

      <StatusBar>
        <StatusCell $open>
          <svg width="12" height="12" viewBox="0 0 12 12" fill="none" stroke="#a9a7a5">
            <path d="M1.500 1.500h9v9h-9zM3.500 1.500v3h5v-3M3.500 10.500v-3h5v3" />
          </svg>
        </StatusCell>
        <StatusCell $left>Sheet 4 of 4</StatusCell>
        <StatusCell />
        <StatusCell $left>PageStyle_Mode d'emploi</StatusCell>
        <StatusCell>English (USA)</StatusCell>
        <StatusCell />
        <StatusCell>
          <svg width="12" height="8" viewBox="0 0 12 8" fill="#fff" stroke={BLUE}>
            <path d="M0.500 0.500h11v7h-11z" />
          </svg>
          <svg width="5" height="12" viewBox="0 0 5 12" stroke={INK}>
            <path d="M0 0.500h5M2.500 0v12M0 11.500h5" />
          </svg>
        </StatusCell>
        <StatusCell />
        <StatusCell />
        <StatusCell>Average: ; Sum: 0</StatusCell>
        <StatusCell>
          <ZoomButton aria-label="Zoom out">−</ZoomButton>
          <ZoomSlider type="range" aria-label="Zoom" min="0" max="100" defaultValue="50" />
          <ZoomButton aria-label="Zoom in">+</ZoomButton>
        </StatusCell>
        <StatusCell $open>100%</StatusCell>
      </StatusBar>
    </Window>
  );
};

export default App;
